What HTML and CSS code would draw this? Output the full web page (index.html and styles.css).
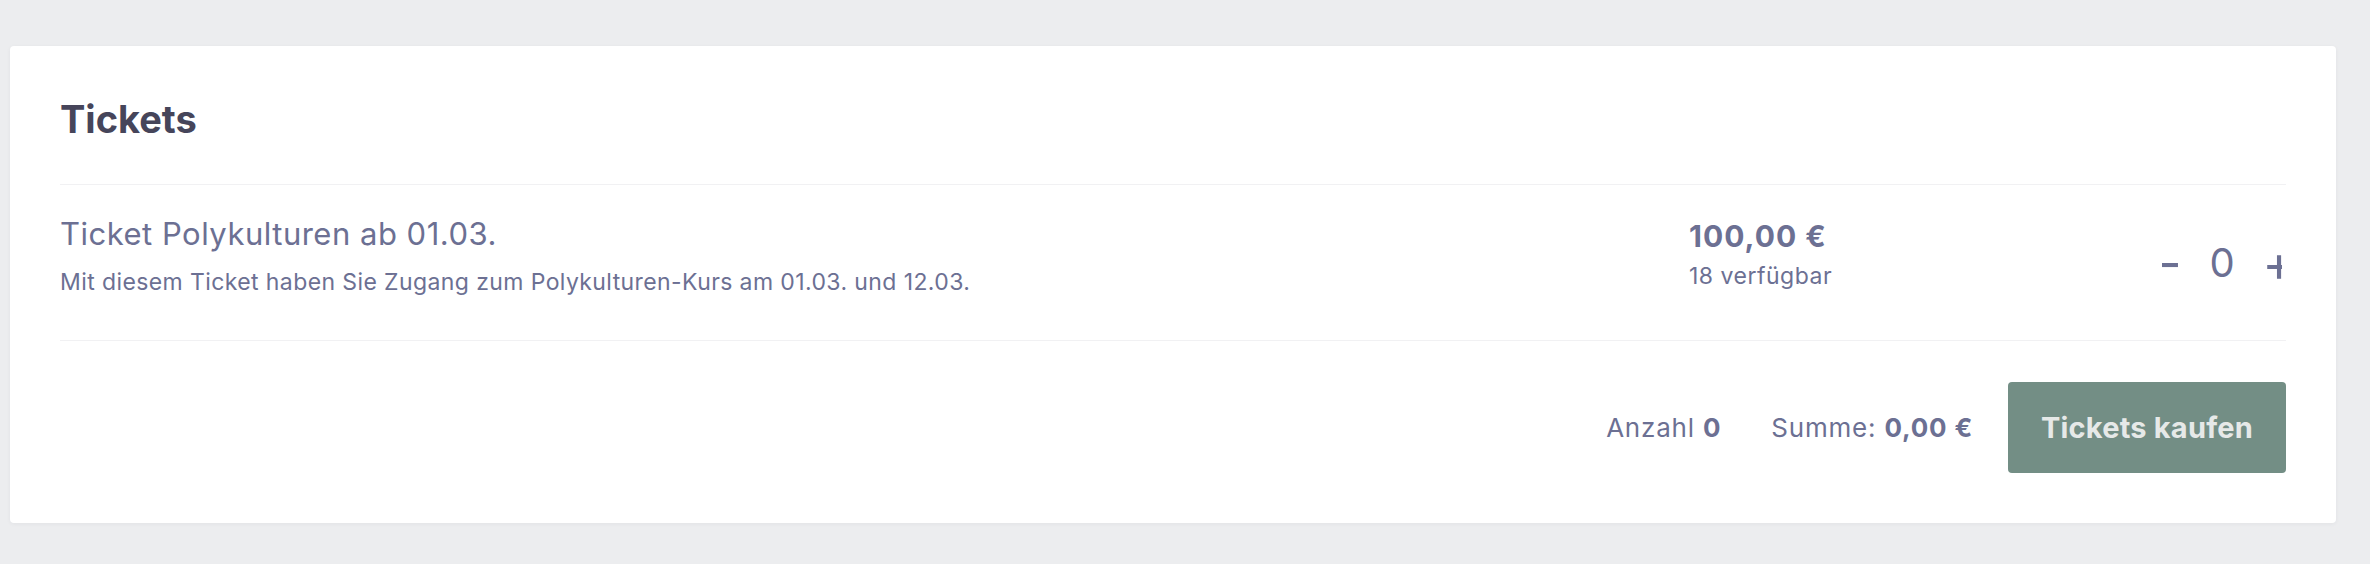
FILE: index.html
```html
<!DOCTYPE html>
<html lang="de">
<head>
<meta charset="utf-8">
<title>Tickets</title>
<link rel="stylesheet" href="styles.css">
</head>
<body>
<main class="page">
  <section class="card">
    <h2 class="card-title">Tickets</h2>
    <div class="ticket-row">
      <div class="ticket-info">
        <div class="ticket-name">Ticket Polykulturen ab 01.03.</div>
        <div class="ticket-desc">Mit diesem Ticket haben Sie Zugang zum Polykulturen-Kurs am 01.03. und 12.03.</div>
      </div>
      <div class="ticket-price">
        <div class="price">100,00 €</div>
        <div class="avail">18 verfügbar</div>
      </div>
      <div class="stepper">
        <span class="step-btn minus">-</span>
        <span class="step-val">0</span>
        <span class="step-btn plus">+</span>
      </div>
    </div>
    <div class="summary">
      <span class="sum-item">Anzahl <b>0</b></span>
      <span class="sum-item">Summe: <b>0,00 €</b></span>
      <button class="buy-btn" type="button">Tickets kaufen</button>
    </div>
  </section>
</main>
</body>
</html>
```

FILE: styles.css
```css
html, body {
  margin: 0;
  padding: 0;
  background: #ecedef;
  font-family: Inter, "Noto Sans", "Liberation Sans", sans-serif;
}

.page {
  padding: 46px 34px 40px 10px;
}

.card {
  background: #ffffff;
  border-radius: 4px;
  box-shadow: 0 1px 4px rgba(30, 30, 50, 0.05);
  padding: 50px;
  height: 477px;
  box-sizing: border-box;
}

.card-title {
  margin: 0 0 42px;
  font-size: 38px;
  line-height: 46px;
  font-weight: 700;
  color: #46455a;
}

.ticket-row {
  display: flex;
  align-items: stretch;
  border-top: 1px solid #f1f1f3;
  border-bottom: 1px solid #f1f1f3;
  height: 157px;
  box-sizing: border-box;
  color: #6c7093;
}

.ticket-info {
  flex: 1;
  padding-top: 31px;
}

.ticket-name {
  font-size: 31px;
  line-height: 36px;
  letter-spacing: 0.5px;
}

.ticket-desc {
  margin-top: 14px;
  font-size: 23px;
  line-height: 32px;
  letter-spacing: 0.4px;
}

.ticket-price {
  width: 450px;
  padding-top: 34px;
}

.price {
  font-size: 30px;
  line-height: 34px;
  font-weight: 700;
  letter-spacing: 1px;
}

.avail {
  margin-top: 8px;
  font-size: 23px;
  line-height: 30px;
  letter-spacing: 0.5px;
}

.stepper {
  width: 143px;
  margin-right: 4px;
  overflow: hidden;
  display: flex;
  align-items: center;
  padding-left: 5px;
  box-sizing: border-box;
  font-size: 40px;
  font-weight: 400;
}

.step-btn,
.step-val {
  flex: none;
  width: 52px;
  text-align: center;
  line-height: 50px;
}

.step-btn {
  font-size: 50px;
}

.step-btn.plus {
  width: 62px;
}

.summary {
  display: flex;
  justify-content: flex-end;
  align-items: center;
  padding-top: 41px;
  color: #6c7093;
  font-size: 26px;
  letter-spacing: 0.8px;
}

.sum-item {
  margin-right: 50px;
}

.sum-item:nth-child(2) {
  margin-right: 35px;
}

.sum-item b {
  font-weight: 700;
}

.buy-btn {
  width: 278px;
  height: 91px;
  border: none;
  border-radius: 4px;
  background: #738e85;
  color: #e6e9e8;
  font-family: inherit;
  font-size: 29px;
  font-weight: 700;
  letter-spacing: 0.2px;
  cursor: pointer;
}
```
